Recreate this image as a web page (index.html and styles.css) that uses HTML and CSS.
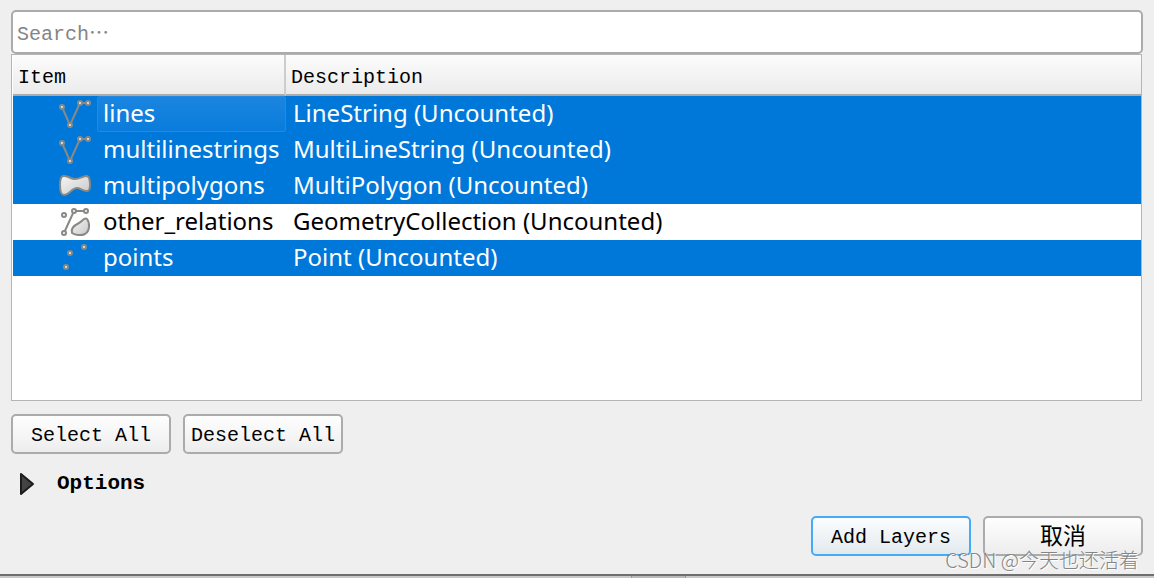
FILE: index.html
```html
<!DOCTYPE html>
<html lang="en">
<head>
<meta charset="utf-8">
<title>Select Items to Add</title>
<link rel="stylesheet" href="styles.css">
</head>
<body>
<svg class="defs" aria-hidden="true">
  <defs>
    <linearGradient id="fill" x1="0" y1="0" x2="1" y2="1">
      <stop offset="0" stop-color="#f6f6f6"/><stop offset="1" stop-color="#c8c8c8"/>
    </linearGradient>
    <symbol id="line" viewBox="0 0 32 32">
      <path d="M3 9 11 27 21 5H29" fill="none" stroke="#888a85" stroke-width="2"/>
      <g fill="#eee" stroke="#888a85" stroke-width="2"><circle cx="3" cy="9" r="2"/><circle cx="11" cy="27" r="2"/><circle cx="21" cy="5" r="2"/><circle cx="29" cy="5" r="2"/></g>
    </symbol>
    <symbol id="polygon" viewBox="0 0 32 32">
      <path d="M4 6C8 5 11 9 16 9 21 9 24 6 28 6 31 7 31 11 31 15 31 18 30 21 28 21 24 21 21 18 18 18 13 18 10 25 5 25 2 25 1 20 1 15 1 11 1 7 4 6Z" fill="url(#fill)" stroke="#888a85" stroke-width="2"/>
    </symbol>
    <symbol id="collection" viewBox="0 0 32 32">
      <path d="M5 27 15 5H27" fill="none" stroke="#888a85" stroke-width="2"/>
      <path d="M28 13C31 17 31 25 26 28 22 30 16 29 13 27 11 22 16 19 20 17 24 15 25 11 28 13Z" fill="url(#fill)" stroke="#888a85" stroke-width="2"/>
      <g fill="#fff" stroke="#888a85" stroke-width="2"><circle cx="5" cy="9" r="2"/><circle cx="5" cy="27" r="2"/><circle cx="15" cy="5" r="2"/><circle cx="27" cy="5" r="2"/></g>
    </symbol>
    <symbol id="point" viewBox="0 0 32 32">
      <g fill="#eee" stroke="#888a85" stroke-width="2"><circle cx="7" cy="25" r="2"/><circle cx="11" cy="11" r="2"/><circle cx="25" cy="5" r="2"/></g>
    </symbol>
  </defs>
</svg>
<main class="dialog">
  <input class="search" type="text" lang="zh-CN" placeholder="Search⋯" aria-label="Search">
  <div class="list">
    <table class="items">
      <thead><tr><th class="col-item">Item</th><th>Description</th></tr></thead>
      <tbody>
        <tr class="selected current"><td><div class="item"><svg class="icon"><use href="#line"/></svg><span class="name">lines</span></div></td><td class="desc">LineString (Uncounted)</td></tr>
        <tr class="selected"><td><div class="item"><svg class="icon"><use href="#line"/></svg><span class="name">multilinestrings</span></div></td><td class="desc">MultiLineString (Uncounted)</td></tr>
        <tr class="selected"><td><div class="item"><svg class="icon"><use href="#polygon"/></svg><span class="name">multipolygons</span></div></td><td class="desc">MultiPolygon (Uncounted)</td></tr>
        <tr><td><div class="item"><svg class="icon"><use href="#collection"/></svg><span class="name">other_relations</span></div></td><td class="desc">GeometryCollection (Uncounted)</td></tr>
        <tr class="selected"><td><div class="item"><svg class="icon"><use href="#point"/></svg><span class="name">points</span></div></td><td class="desc">Point (Uncounted)</td></tr>
      </tbody>
    </table>
  </div>
  <div class="buttons">
    <button class="button" type="button">Select All</button>
    <button class="button" type="button">Deselect All</button>
  </div>
  <button class="options" type="button" aria-expanded="false">
    <svg class="arrow" viewBox="0 0 16 24"><path d="M2 2V22L14 12Z" fill="#444" stroke="#1c1c1c" stroke-width="2" stroke-linejoin="round"/></svg>
    Options
  </button>
  <div class="buttons actions">
    <button class="button primary" type="button">Add Layers</button>
    <button class="button cancel" type="button">取消</button>
  </div>
  <div class="watermark">CSDN @今天也还活着</div>
</main>
<div class="behind"><span class="tab"></span></div>
</body>
</html>
```
FILE: styles.css
```css
* { box-sizing: border-box; }
body {
  margin: 0;
  min-height: 100vh;
  display: flex;
  flex-direction: column;
  background: #efefef;
  color: #000;
  font: 20px/24px "Liberation Mono", "Noto Sans CJK SC", monospace;
}
.defs { position: absolute; width: 0; height: 0; }
.dialog {
  position: relative;
  flex: 1;
  display: flex;
  flex-direction: column;
  padding: 10px 11px 18px;
  border-bottom: 2px solid #6f6f6f;
}
.search {
  width: 100%;
  height: 44px;
  padding: 4px 4px 0;
  border: 2px solid #ababab;
  border-radius: 5px;
  background: #fff;
  color: #000;
  font: inherit;
}
.search::placeholder { color: #858585; opacity: 1; }
.list {
  flex: 1;
  margin-right: 1px;
  padding-left: 1px;
  border: 1px solid #b5b5b5;
  background: #fff;
}
.items {
  width: 100%;
  border-collapse: separate;
  border-spacing: 0;
  table-layout: fixed;
}
th {
  height: 41px;
  padding: 6px 5px 0;
  border-bottom: 2px solid #ababab;
  background: linear-gradient(#fcfcfc, #ebebeb);
  font-weight: normal;
  text-align: left;
}
.col-item { width: 273px; border-right: 2px solid #cdcdcd; }
td {
  height: 36px;
  padding: 0;
  font: 24px/32px "Noto Sans", "Noto Sans CJK SC", sans-serif;
  white-space: nowrap;
}
.desc { padding: 0 0 2px 7px; }
.selected { background: #0078d9; color: #fff; }
.item { display: flex; align-items: center; padding-left: 46px; }
.icon { flex: none; width: 32px; height: 32px; margin-right: 6px; }
.name {
  flex: 1;
  border: 1px solid transparent;
  padding: 0 0 2px 5px;
}
.current .name {
  border-color: #2489e2;
  border-radius: 2px;
  background: linear-gradient(#1a85e0, #0a7cdb);
}
.buttons { display: flex; gap: 12px; margin-top: 13px; }
.button {
  min-width: 160px;
  height: 40px;
  padding: 4px 6px 0;
  border: 2px solid #ababab;
  border-radius: 5px;
  background: linear-gradient(#fefefe, #ededed);
  color: #000;
  font: inherit;
}
.primary { border-color: #45aaf8; background: linear-gradient(#fbfdfe, #e2e9ee); }
.cancel { font-size: 23px; }
.options {
  display: flex;
  align-items: center;
  align-self: flex-start;
  gap: 22px;
  height: 24px;
  margin-top: 18px;
  padding: 0 8px;
  border: 0;
  background: none;
  color: #000;
  font: inherit;
  font-size: 21px;
  font-weight: bold;
}
.arrow { width: 16px; height: 24px; }
.actions { justify-content: flex-end; margin-top: 20px; }
.watermark {
  position: absolute;
  right: 15px;
  bottom: 0;
  color: #858585;
  font: 20px/28px "Noto Sans CJK SC", sans-serif;
  font-weight: 300;
  text-shadow: 1px 1px #fff;
  pointer-events: none;
}
.behind { height: 2px; padding-left: 631px; background: #c9c9c9; }
.tab { display: block; width: 55px; height: 2px; border: solid #999; border-width: 0 1px; background: #bababa; }
```
